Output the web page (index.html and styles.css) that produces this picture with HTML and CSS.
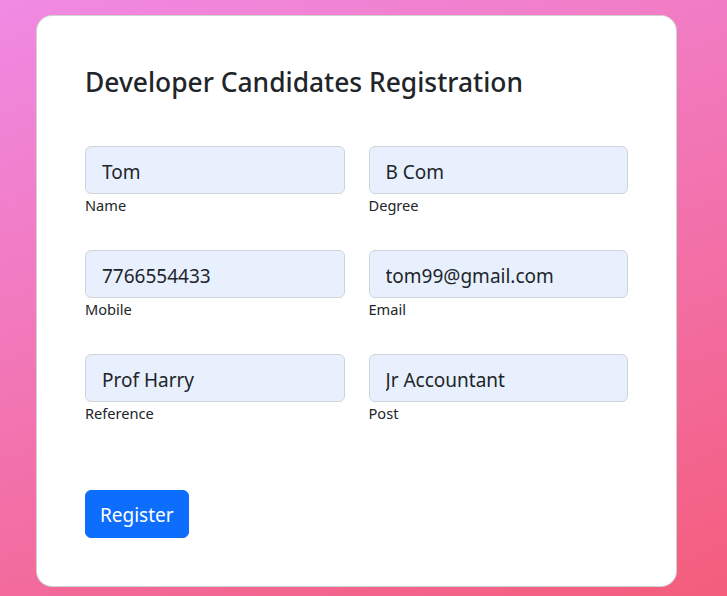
FILE: index.html
```html
<!DOCTYPE html>
<html lang="en">
<head>
<meta charset="utf-8">
<title>Developer Candidates Registration</title>
<link rel="stylesheet" href="styles.css">
</head>
<body>
<div class="card">
  <h3 class="title">Developer Candidates Registration</h3>
  <form class="form">
    <div class="grid">
      <div class="field">
        <input class="control" type="text" value="Tom">
        <label class="label">Name</label>
      </div>
      <div class="field">
        <input class="control" type="text" value="B Com">
        <label class="label">Degree</label>
      </div>
      <div class="field">
        <input class="control" type="text" value="7766554433">
        <label class="label">Mobile</label>
      </div>
      <div class="field">
        <input class="control" type="text" value="tom99@gmail.com">
        <label class="label">Email</label>
      </div>
      <div class="field">
        <input class="control" type="text" value="Prof Harry">
        <label class="label">Reference</label>
      </div>
      <div class="field">
        <input class="control" type="text" value="Jr Accountant">
        <label class="label">Post</label>
      </div>
    </div>
    <button class="btn" type="button">Register</button>
  </form>
</div>
</body>
</html>
```
FILE: styles.css
```css
* { box-sizing: border-box; }
html, body { margin: 0; height: 100%; }
body {
  font-family: "Noto Sans", "Open Sans", sans-serif;
  color: #212529;
  background: linear-gradient(160deg, #f08ae4 0%, #f45d7c 100%);
  padding: 15px 0 0 36px;
  overflow: hidden;
}
.card {
  width: 641px;
  background: #fff;
  border: 1px solid rgba(0,0,0,0.175);
  border-radius: 16px;
  padding: 49px 48px 48px 48px;
}
.title {
  margin: 0 0 47px 0;
  font-size: 26.4px;
  font-weight: 500;
  line-height: 34px;
}
.grid {
  display: grid;
  grid-template-columns: 1fr 1fr;
  column-gap: 24px;
  row-gap: 34px;
}
.field { display: flex; flex-direction: column; }
.control {
  height: 48px;
  width: 100%;
  padding: 10px 16px 6px 16px;
  font-family: inherit;
  font-size: 19px;
  color: #212529;
  background: #e8f0fe;
  border: 1px solid #ced4da;
  border-radius: 6px;
  outline: none;
}
.label {
  font-size: 14.6px;
  line-height: 21px;
  margin-top: 1px;
}
.btn {
  margin-top: 66px;
  height: 48px;
  padding: 2px 14px 0 14px;
  font-family: inherit;
  font-size: 19px;
  color: #fff;
  background: #0d6efd;
  border: 1px solid #0d6efd;
  border-radius: 6px;
  display: block;
}
```
